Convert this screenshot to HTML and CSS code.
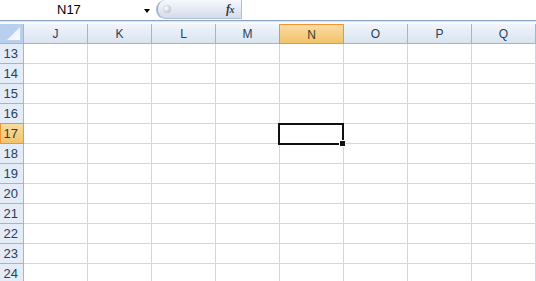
FILE: index.html
```html
<!DOCTYPE html>
<html>
<head>
<meta charset="utf-8">
<link rel="stylesheet" href="styles.css">
</head>
<body>
<div class="app">
  <div class="topbar">
    <div class="namebox">
      <span class="name">N17</span>
      <span class="arrow"></span>
    </div>
    <div class="fxpill">
      <span class="knob"></span>
      <span class="fx">f<span class="x">x</span></span>
    </div>
  </div>
  <div class="sep"></div>
  <div class="sheet">
    <div class="grid">
      <div class="corner"><span class="tri"></span></div>
      <div class="ch">J</div><div class="ch">K</div><div class="ch">L</div><div class="ch">M</div><div class="ch sel">N</div><div class="ch">O</div><div class="ch">P</div><div class="ch">Q</div>

      <div class="rh">13</div><div class="c"></div><div class="c"></div><div class="c"></div><div class="c"></div><div class="c"></div><div class="c"></div><div class="c"></div><div class="c"></div>
      <div class="rh">14</div><div class="c"></div><div class="c"></div><div class="c"></div><div class="c"></div><div class="c"></div><div class="c"></div><div class="c"></div><div class="c"></div>
      <div class="rh">15</div><div class="c"></div><div class="c"></div><div class="c"></div><div class="c"></div><div class="c"></div><div class="c"></div><div class="c"></div><div class="c"></div>
      <div class="rh">16</div><div class="c"></div><div class="c"></div><div class="c"></div><div class="c"></div><div class="c"></div><div class="c"></div><div class="c"></div><div class="c"></div>
      <div class="rh sel">17</div><div class="c"></div><div class="c"></div><div class="c"></div><div class="c"></div><div class="c"></div><div class="c"></div><div class="c"></div><div class="c"></div>
      <div class="rh">18</div><div class="c"></div><div class="c"></div><div class="c"></div><div class="c"></div><div class="c"></div><div class="c"></div><div class="c"></div><div class="c"></div>
      <div class="rh">19</div><div class="c"></div><div class="c"></div><div class="c"></div><div class="c"></div><div class="c"></div><div class="c"></div><div class="c"></div><div class="c"></div>
      <div class="rh">20</div><div class="c"></div><div class="c"></div><div class="c"></div><div class="c"></div><div class="c"></div><div class="c"></div><div class="c"></div><div class="c"></div>
      <div class="rh">21</div><div class="c"></div><div class="c"></div><div class="c"></div><div class="c"></div><div class="c"></div><div class="c"></div><div class="c"></div><div class="c"></div>
      <div class="rh">22</div><div class="c"></div><div class="c"></div><div class="c"></div><div class="c"></div><div class="c"></div><div class="c"></div><div class="c"></div><div class="c"></div>
      <div class="rh">23</div><div class="c"></div><div class="c"></div><div class="c"></div><div class="c"></div><div class="c"></div><div class="c"></div><div class="c"></div><div class="c"></div>
      <div class="rh">24</div><div class="c"></div><div class="c"></div><div class="c"></div><div class="c"></div><div class="c"></div><div class="c"></div><div class="c"></div><div class="c"></div>
    </div>
    <div class="selection"><span class="handle"></span></div>
  </div>
</div>
</body>
</html>
```
FILE: styles.css
```css
html, body {
  margin: 0;
  padding: 0;
  background: #ffffff;
  overflow: hidden;
}
.app {
  width: 536px;
  height: 281px;
  overflow: hidden;
  font-family: "Liberation Sans", Arial, sans-serif;
}
.topbar {
  height: 20px;
  display: flex;
  background: #ffffff;
}
.namebox {
  width: 156px;
  display: flex;
  align-items: center;
}
.name {
  font-size: 13px;
  color: #000;
  margin-left: 57px;
  margin-top: -1px;
}
.arrow {
  margin-left: 63px;
  width: 0;
  height: 0;
  border-left: 3.5px solid transparent;
  border-right: 3.5px solid transparent;
  border-top: 4px solid #000;
  margin-top: 1px;
}
.fxpill {
  width: 86px;
  height: 19px;
  border: 1px solid #aebfd6;
  border-left: 2px solid #9fb3ce;
  border-top: none;
  border-top-left-radius: 10px 10px;
  border-bottom-left-radius: 10px 10px;
  background: linear-gradient(to bottom, #f6f8fc 0%, #e6ecf6 45%, #d2dcec 100%);
  display: flex;
  align-items: center;
  box-sizing: border-box;
}
.knob {
  width: 8px;
  height: 8px;
  border-radius: 50%;
  background: radial-gradient(circle at 40% 40%, #ffffff 0%, #cdd3dc 55%, #a7b0bd 100%);
  margin-left: 5px;
  margin-top: -1px;
}
.fx {
  margin-left: auto;
  margin-right: 7px;
  font-family: "Liberation Serif", "Times New Roman", serif;
  font-style: italic;
  font-size: 12px;
  color: #3a3a3a;
  font-weight: bold;
  letter-spacing: -0.5px;
}
.fx .x {
  font-size: 10px;
}
.sep {
  height: 4px;
  border-top: 1px solid #8aa3c2;
  background: linear-gradient(to bottom, #c9d6e6 0px, #f1f4f8 1px, #ffffff 100%);
  box-sizing: border-box;
}
.sheet {
  position: relative;
}
.grid {
  display: grid;
  grid-template-columns: 24px repeat(8, 64px);
  grid-auto-rows: 20px;
}
.grid > div {
  box-sizing: border-box;
}
.corner {
  background: #b9cfee;
  border-right: 1px solid #9eb6ce;
  border-bottom: 1px solid #9eb6ce;
  position: relative;
}
.tri {
  position: absolute;
  right: 3px;
  bottom: 3px;
  width: 13px;
  height: 13px;
  background: linear-gradient(135deg, #e6eef9 0%, #f8fbff 100%);
  clip-path: polygon(100% 0, 100% 100%, 0 100%);
}
.ch {
  background: linear-gradient(to bottom, #f1f5fb 0%, #e6edf7 45%, #dae3f0 100%);
  border-right: 1px solid #9eb6ce;
  border-bottom: 1px solid #9eb6ce;
  display: flex;
  align-items: center;
  justify-content: center;
  font-size: 12px;
  color: #27415c;
  padding-top: 1px;
}
.ch.sel {
  background: linear-gradient(to bottom, #f9dba3 0%, #f6cf86 50%, #f2c36a 100%);
  border: 1px solid #f29436;
  margin-left: -1px;
  color: #30402a;
}
.rh {
  background: #e4ecf7;
  border-right: 1px solid #9eb6ce;
  border-bottom: 1px solid #9eb6ce;
  display: flex;
  align-items: center;
  justify-content: flex-end;
  padding-right: 5px;
  font-size: 13px;
  color: #27415c;
}
.rh.sel {
  background: linear-gradient(to bottom, #f9dba3 0%, #f6cf86 50%, #f2c36a 100%);
  border: 1px solid #f29436;
  margin-top: -1px;
  color: #30402a;
}
.c {
  border-right: 1px solid #d0d7e5;
  border-bottom: 1px solid #d0d7e5;
  background: #ffffff;
}
.selection {
  position: absolute;
  left: 278px;
  top: 99px;
  width: 66px;
  height: 22px;
  border: 2px solid #111111;
  box-sizing: border-box;
}
.handle {
  position: absolute;
  right: -4px;
  bottom: -4px;
  width: 5px;
  height: 5px;
  background: #111111;
  border: 1px solid #ffffff;
}
```
